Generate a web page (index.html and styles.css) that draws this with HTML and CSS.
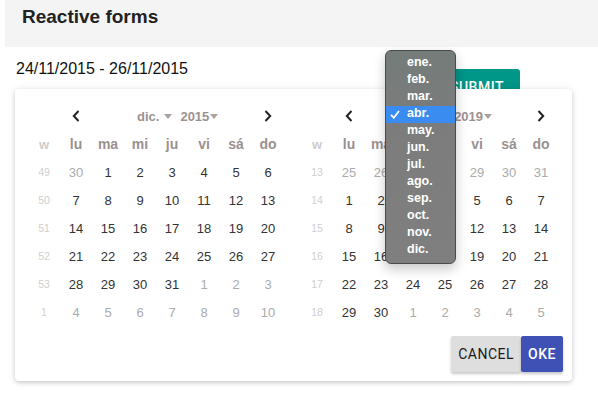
FILE: index.html
```html
<!DOCTYPE html>
<html lang="es">
<head>
<meta charset="utf-8">
<title>Reactive forms</title>
<link rel="stylesheet" href="styles.css">
</head>
<body>
<header class="app-header"><h1>Reactive forms</h1></header>

<form class="form-row">
  <div class="date-value">24/11/2015 - 26/11/2015</div>
  <button type="button" class="submit">SUBMIT</button>
</form>

<div class="picker">
  <div class="months">
    <div class="month">
      <span class="nav prev"><svg width="8" height="12" viewBox="0 0 8 12"><polyline points="6.5,1 1.8,6 6.5,11" fill="none" stroke="#222" stroke-width="2"/></svg></span>
      <span class="title"><span class="sel-m">dic.</span><i class="caret gap"></i><span class="sel-y">2015</span><i class="caret"></i></span>
      <span class="nav next"><svg width="8" height="12" viewBox="0 0 8 12"><polyline points="1.5,1 6.2,6 1.5,11" fill="none" stroke="#222" stroke-width="2"/></svg></span>

      <span class="wk-h">w</span><span class="dow">lu</span><span class="dow">ma</span><span class="dow">mi</span><span class="dow">ju</span><span class="dow">vi</span><span class="dow">sá</span><span class="dow">do</span>

      <span class="wk">49</span><span class="day out">30</span><span class="day">1</span><span class="day">2</span><span class="day">3</span><span class="day">4</span><span class="day">5</span><span class="day">6</span>
      <span class="wk">50</span><span class="day">7</span><span class="day">8</span><span class="day">9</span><span class="day">10</span><span class="day">11</span><span class="day">12</span><span class="day">13</span>
      <span class="wk">51</span><span class="day">14</span><span class="day">15</span><span class="day">16</span><span class="day">17</span><span class="day">18</span><span class="day">19</span><span class="day">20</span>
      <span class="wk">52</span><span class="day">21</span><span class="day">22</span><span class="day">23</span><span class="day">24</span><span class="day">25</span><span class="day">26</span><span class="day">27</span>
      <span class="wk">53</span><span class="day">28</span><span class="day">29</span><span class="day">30</span><span class="day">31</span><span class="day out">1</span><span class="day out">2</span><span class="day out">3</span>
      <span class="wk">1</span><span class="day out">4</span><span class="day out">5</span><span class="day out">6</span><span class="day out">7</span><span class="day out">8</span><span class="day out">9</span><span class="day out">10</span>
    </div>

    <div class="month">
      <span class="nav prev"><svg width="8" height="12" viewBox="0 0 8 12"><polyline points="6.5,1 1.8,6 6.5,11" fill="none" stroke="#222" stroke-width="2"/></svg></span>
      <span class="title"><span class="sel-m">abr.</span><i class="caret gap"></i><span class="sel-y">2019</span><i class="caret"></i></span>
      <span class="nav next"><svg width="8" height="12" viewBox="0 0 8 12"><polyline points="1.5,1 6.2,6 1.5,11" fill="none" stroke="#222" stroke-width="2"/></svg></span>

      <span class="wk-h">w</span><span class="dow">lu</span><span class="dow">ma</span><span class="dow">mi</span><span class="dow">ju</span><span class="dow">vi</span><span class="dow">sá</span><span class="dow">do</span>

      <span class="wk">13</span><span class="day out">25</span><span class="day out">26</span><span class="day out">27</span><span class="day out">28</span><span class="day out">29</span><span class="day out">30</span><span class="day out">31</span>
      <span class="wk">14</span><span class="day">1</span><span class="day">2</span><span class="day">3</span><span class="day">4</span><span class="day">5</span><span class="day">6</span><span class="day">7</span>
      <span class="wk">15</span><span class="day">8</span><span class="day">9</span><span class="day">10</span><span class="day">11</span><span class="day">12</span><span class="day">13</span><span class="day">14</span>
      <span class="wk">16</span><span class="day">15</span><span class="day">16</span><span class="day">17</span><span class="day">18</span><span class="day">19</span><span class="day">20</span><span class="day">21</span>
      <span class="wk">17</span><span class="day">22</span><span class="day">23</span><span class="day">24</span><span class="day">25</span><span class="day">26</span><span class="day">27</span><span class="day">28</span>
      <span class="wk">18</span><span class="day">29</span><span class="day">30</span><span class="day out">1</span><span class="day out">2</span><span class="day out">3</span><span class="day out">4</span><span class="day out">5</span>
    </div>
  </div>

  <div class="actions">
    <button type="button" class="btn cancel">CANCEL</button>
    <button type="button" class="btn ok">OKE</button>
  </div>
</div>

<ul class="month-menu">
  <li>ene.</li>
  <li>feb.</li>
  <li>mar.</li>
  <li class="sel"><svg class="check" width="10" height="9" viewBox="0 0 10 9"><polyline points="1,4.8 3.8,7.8 9,1" fill="none" stroke="#fff" stroke-width="1.7"/></svg>abr.</li>
  <li>may.</li>
  <li>jun.</li>
  <li>jul.</li>
  <li>ago.</li>
  <li>sep.</li>
  <li>oct.</li>
  <li>nov.</li>
  <li>dic.</li>
</ul>
</body>
</html>
```

FILE: styles.css
```css
* { box-sizing: border-box; }

html, body { margin: 0; padding: 0; }

body {
  position: relative;
  width: 598px;
  height: 420px;
  overflow: hidden;
  background: #fff;
  color: #222;
  font-family: "Liberation Sans", Arial, sans-serif;
}

.app-header {
  margin-left: 5px;
  height: 47px;
  padding: 7px 0 0 17px;
  background: #f4f4f4;
}

.app-header h1 {
  margin: 0;
  font-size: 19px;
  line-height: 20px;
  font-weight: bold;
  color: #222;
}

.form-row {
  display: flex;
  align-items: flex-start;
  margin: 12px 0 0;
  padding-left: 16px;
}

.date-value {
  font-size: 16px;
  line-height: 20px;
  color: #111;
}

.submit {
  margin: 10px 78px 0 auto;
  height: 36px;
  padding: 0 16px;
  border: 0;
  border-radius: 3px;
  background: #009688;
  color: #fff;
  font: 500 14px Roboto, "Liberation Sans", sans-serif;
  letter-spacing: .5px;
}

.picker {
  position: absolute;
  top: 89px;
  left: 15px;
  width: 557px;
  height: 292px;
  padding: 13px 9px 9px 13px;
  display: flex;
  flex-direction: column;
  background: #fff;
  border-radius: 4px;
  box-shadow: 0 2px 4px rgba(0, 0, 0, .16), 0 0 9px rgba(0, 0, 0, .08);
}

.months {
  display: flex;
  gap: 17px;
}

.month {
  display: grid;
  grid-template-columns: repeat(8, 32px);
  grid-auto-rows: 28px;
  align-items: center;
  justify-items: center;
}

.nav { display: flex; align-items: center; justify-content: center; width: 32px; height: 28px; }
.prev { grid-column: 2; }
.next { grid-column: 8; }

.title {
  grid-column: 3 / 8;
  justify-self: stretch;
  display: flex;
  align-items: center;
  padding-left: 45px;
  font-size: 13px;
  font-weight: bold;
  color: #9c9191;
}

.caret {
  display: inline-block;
  width: 0;
  height: 0;
  margin-left: 1px;
  border-left: 4px solid transparent;
  border-right: 4px solid transparent;
  border-top: 5px solid #aaa2a2;
}

.caret.gap { margin: 0 8px 0 5px; }

.wk-h {
  font-size: 13px;
  font-weight: bold;
  color: #cdcdcd;
}

.dow {
  font-size: 14px;
  font-weight: bold;
  color: #9b9090;
}

.wk {
  font-size: 10.5px;
  color: #cfcfcf;
}

.day {
  font-size: 13px;
  color: #333;
}

.day.out { color: #ababab; }

.actions {
  display: flex;
  justify-content: flex-end;
  margin-top: 10px;
}

.btn {
  height: 36px;
  padding: 0 7px;
  border: 0;
  border-radius: 2px;
  font-family: Roboto, "Liberation Sans", sans-serif;
  font-size: 14px;
  font-weight: 400;
  letter-spacing: .5px;
  box-shadow: 0 2px 3px rgba(0, 0, 0, .22);
}

.cancel { background: #dedede; color: #1a1a1a; }
.ok { background: #3f51b5; color: #fff; font-weight: 500; }

.month-menu {
  position: absolute;
  left: 385px;
  top: 50px;
  width: 71px;
  height: 214px;
  margin: 0;
  padding: 3.5px 0 0;
  list-style: none;
  border: 1px solid #4a4a4a;
  border-radius: 6px;
  background: linear-gradient(#747c79, #7b7c7b 30%, #7f7f7f);
  box-shadow: 0 5px 12px rgba(0, 0, 0, .22);
}

.month-menu li {
  position: relative;
  height: 17px;
  line-height: 17px;
  padding-left: 21px;
  font: bold 12.5px "Liberation Sans", Arial, sans-serif;
  color: #fff;
}

.month-menu li.sel { background: #3a8cf1; }

.check {
  position: absolute;
  left: 4px;
  top: 4px;
}
```
